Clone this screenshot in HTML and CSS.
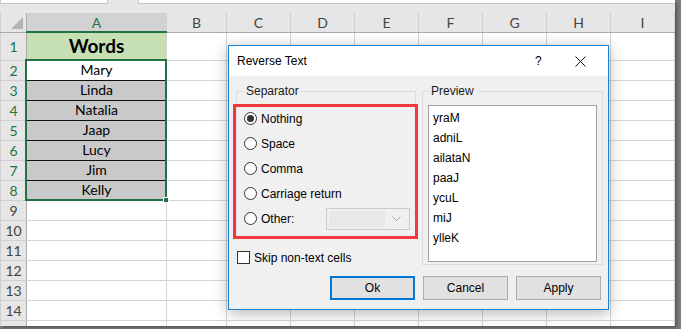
FILE: index.html
```html
<!DOCTYPE html>
<html lang="en">

<head>
    <meta charset="UTF-8">
    <title>Reverse Text</title>
    <link rel="stylesheet" href="styles.css">
</head>

<body>
    <div class="screen">
        <div class="formula-strip">
            <div class="name-box"></div>
            <div class="formula-box"></div>
        </div>

        <table class="sheet">
            <colgroup>
                <col class="c-hdr">
                <col class="c-a">
                <col class="c-b">
                <col class="c-std" span="7">
            </colgroup>
            <tr class="hdr-row">
                <th class="corner"><svg width="12" height="12" viewBox="0 0 12 12"><polygon points="12,0 12,12 0,12" fill="#b4b4b4"/></svg></th>
                <th class="col-sel">A</th><th>B</th><th>C</th><th>D</th><th>E</th><th>F</th><th>G</th><th>H</th><th>I</th>
            </tr>
            <tr class="row-1">
                <th class="row-sel">1</th><td class="words">Words</td><td></td><td></td><td></td><td></td><td></td><td></td><td></td><td></td>
            </tr>
            <tr>
                <th class="row-sel">2</th><td class="name">Mary</td><td></td><td></td><td></td><td></td><td></td><td></td><td></td><td></td>
            </tr>
            <tr>
                <th class="row-sel">3</th><td class="name grey">Linda</td><td></td><td></td><td></td><td></td><td></td><td></td><td></td><td></td>
            </tr>
            <tr>
                <th class="row-sel">4</th><td class="name grey">Natalia</td><td></td><td></td><td></td><td></td><td></td><td></td><td></td><td></td>
            </tr>
            <tr>
                <th class="row-sel">5</th><td class="name grey">Jaap</td><td></td><td></td><td></td><td></td><td></td><td></td><td></td><td></td>
            </tr>
            <tr>
                <th class="row-sel">6</th><td class="name grey">Lucy</td><td></td><td></td><td></td><td></td><td></td><td></td><td></td><td></td>
            </tr>
            <tr>
                <th class="row-sel">7</th><td class="name grey">Jim</td><td></td><td></td><td></td><td></td><td></td><td></td><td></td><td></td>
            </tr>
            <tr>
                <th class="row-sel">8</th><td class="name grey last">Kelly</td><td></td><td></td><td></td><td></td><td></td><td></td><td></td><td></td>
            </tr>
            <tr>
                <th>9</th><td></td><td></td><td></td><td></td><td></td><td></td><td></td><td></td><td></td>
            </tr>
            <tr>
                <th>10</th><td></td><td></td><td></td><td></td><td></td><td></td><td></td><td></td><td></td>
            </tr>
            <tr>
                <th>11</th><td></td><td></td><td></td><td></td><td></td><td></td><td></td><td></td><td></td>
            </tr>
            <tr>
                <th>12</th><td></td><td></td><td></td><td></td><td></td><td></td><td></td><td></td><td></td>
            </tr>
            <tr>
                <th>13</th><td></td><td></td><td></td><td></td><td></td><td></td><td></td><td></td><td></td>
            </tr>
            <tr>
                <th>14</th><td></td><td></td><td></td><td></td><td></td><td></td><td></td><td></td><td></td>
            </tr>
            <tr>
                <th></th><td></td><td></td><td></td><td></td><td></td><td></td><td></td><td></td><td></td>
            </tr>
        </table>

        <!-- selection A2:A8 -->
        <div class="selection"><span class="fill-handle"></span></div>

        <div class="dialog">
            <div class="dlg-title">
                <span class="dlg-name">Reverse Text</span>
                <span class="dlg-help">?</span>
                <span class="dlg-close">
                    <svg width="11" height="11" viewBox="0 0 11 11"><path d="M0.5 0.5 L10.5 10.5 M10.5 0.5 L0.5 10.5" stroke="#111" stroke-width="1" fill="none"/></svg>
                </span>
            </div>

            <div class="dlg-body">
                <div class="dlg-cols">
                    <div class="dlg-left">
                        <fieldset class="group group-sep">
                            <legend>Separator</legend>
                            <label class="opt"><span class="radio checked"></span>Nothing</label>
                            <label class="opt"><span class="radio"></span>Space</label>
                            <label class="opt"><span class="radio"></span>Comma</label>
                            <label class="opt"><span class="radio"></span>Carriage return</label>
                            <label class="opt"><span class="radio"></span>Other:
                                <span class="combo">
                                    <span class="combo-field"></span>
                                    <svg width="9" height="6" viewBox="0 0 9 6"><path d="M0.5 0.5 L4.5 4.5 L8.5 0.5" stroke="#a8a8a8" fill="none"/></svg>
                                </span>
                            </label>
                        </fieldset>
                        <label class="check"><span class="box"></span>Skip non-text cells</label>
                    </div>

                    <fieldset class="group group-preview">
                        <legend>Preview</legend>
                        <ul class="preview-list">
                            <li>yraM</li>
                            <li>adniL</li>
                            <li>ailataN</li>
                            <li>paaJ</li>
                            <li>ycuL</li>
                            <li>miJ</li>
                            <li>ylleK</li>
                        </ul>
                    </fieldset>
                </div>

                <div class="dlg-buttons">
                    <button class="btn btn-default">Ok</button>
                    <button class="btn">Cancel</button>
                    <button class="btn">Apply</button>
                </div>
            </div>

            <!-- red callout round the separator options -->
            <div class="highlight"></div>
        </div>
    </div>
</body>

</html>
```

FILE: styles.css
```css
* {
    box-sizing: border-box;
}

body {
    margin: 0;
    width: 681px;
    height: 329px;
    overflow: hidden;
    background: #7f7f7f;
}

.screen {
    position: relative;
    width: 675px;
    height: 326px;
    overflow: hidden;
    background: #fff;
    box-shadow: 2px 2px 4px rgba(0, 0, 0, 0.35);
}

/* formula bar remains */

.formula-strip {
    display: flex;
    height: 13px;
    background: #e6e6e6;
}

.name-box {
    width: 108px;
    height: 4px;
    background: #fff;
    border: 1px solid #c6c6c6;
    border-top: 0;
    margin-right: 30px;
}

.formula-box {
    flex: 1;
    height: 4px;
    background: #fff;
    border: 1px solid #c6c6c6;
    border-top: 0;
    border-right: 0;
}

/* worksheet */

.sheet {
    table-layout: fixed;
    border-collapse: collapse;
    width: 674px;
    font-family: Lato, "Liberation Sans", sans-serif;
    font-size: 14px;
    color: #000;
}

.c-hdr {
    width: 26px;
}

.c-a {
    width: 140px;
}

.c-b {
    width: 60px;
}

.c-std {
    width: 64px;
}

.sheet tr {
    height: 20px;
}

.sheet .hdr-row {
    height: 19px;
}

.sheet .row-1 {
    height: 28px;
}

.sheet td {
    border: 1px solid #d4d4d4;
    padding: 0;
    text-align: center;
    line-height: 18px;
}

.sheet th {
    background: #e6e6e6;
    border: 1px solid #cfcfcf;
    border-right-color: #ababab;
    padding: 0;
    font-weight: normal;
    font-size: 14px;
    color: #444;
    text-align: center;
}

.hdr-row th {
    border-top: 0;
    border-right-color: #cfcfcf;
    border-bottom: 1px solid #ababab;
    line-height: 17px;
}

.hdr-row .corner {
    border-right-color: #ababab;
    text-align: right;
    vertical-align: bottom;
    padding: 0 3px 3px 0;
    line-height: 0;
}

.hdr-row .col-sel {
    background: #d2d2d2;
    color: #217346;
    border-bottom: 2px solid #217346;
}

.sheet th.row-sel {
    color: #217346;
}

.words {
    background: #c6e0b4;
    font-weight: bold;
    font-size: 19px;
    border-right-color: #3b6b4d;
}

.sheet td.grey {
    background: #c9c9c9;
}

.sheet td.name {
    border-bottom: 1px solid #111;
    border-right-color: #217346;
}

.sheet td.last {
    border-bottom-color: #217346;
}

/* green selection frame */

.selection {
    position: absolute;
    left: 25px;
    top: 59px;
    width: 142px;
    height: 142px;
    border: 2px solid #217346;
}

.fill-handle {
    position: absolute;
    right: -4px;
    bottom: -4px;
    width: 6px;
    height: 6px;
    background: #217346;
    border: 1px solid #fff;
}

/* dialog */

.dialog {
    position: absolute;
    left: 228px;
    top: 45px;
    width: 381px;
    height: 265px;
    background: #f0f0f0;
    border: 1px solid #1883d7;
    box-shadow: 0 3px 14px rgba(0, 0, 0, 0.3);
    font-family: "Liberation Sans", Arial, sans-serif;
    font-size: 12px;
    color: #000;
}

.dlg-title {
    display: flex;
    align-items: center;
    height: 30px;
    background: #fff;
    padding-left: 8px;
}

.dlg-name {
    flex: 1;
}

.dlg-help {
    width: 40px;
}

.dlg-close {
    width: 33px;
    line-height: 0;
}

.dlg-body {
    padding: 8px 5px 0 7px;
}

.dlg-cols {
    display: flex;
    gap: 6px;
    align-items: flex-start;
}

.group {
    margin: 0;
    border: 1px solid #dcdcdc;
    min-width: 0;
}

.group legend {
    padding: 0 2px;
    line-height: 14px;
    color: #1a1a1a;
}

.group-sep {
    width: 180px;
    padding: 8px 5px 7px 7px;
}

.group-preview {
    width: 181px;
    padding: 7px 5px 2px 5px;
}

.group-preview legend {
    margin-left: 1px;
}

.opt {
    display: flex;
    align-items: center;
    height: 25px;
}

.radio {
    position: relative;
    width: 13px;
    height: 13px;
    margin-right: 4px;
    border: 1px solid #333;
    border-radius: 50%;
    background: #fff;
}

.radio.checked::after {
    content: "";
    position: absolute;
    left: 2px;
    top: 2px;
    width: 7px;
    height: 7px;
    border-radius: 50%;
    background: #333;
}

.combo {
    display: flex;
    align-items: center;
    margin-left: auto;
    width: 84px;
    height: 22px;
    padding: 2px 8px 2px 2px;
    border: 1px solid #cccccc;
    background: #f0f0f0;
}

.combo-field {
    flex: 1;
    height: 100%;
    margin-right: 7px;
    background: #e8e8e8;
}

.check {
    display: flex;
    align-items: center;
    margin: 12px 0 0 1px;
    height: 13px;
}

.box {
    width: 13px;
    height: 13px;
    margin-right: 4px;
    border: 1px solid #333;
    background: #fff;
}

.preview-list {
    list-style: none;
    margin: 0;
    padding: 2px 4px;
    height: 157px;
    background: #fff;
    border: 1px solid #a0a0a0;
}

.preview-list li {
    line-height: 20px;
}

.dlg-buttons {
    display: flex;
    justify-content: flex-end;
    gap: 8px;
    margin: 11px 2px 0 0;
}

.btn {
    width: 85px;
    height: 24px;
    padding: 0;
    background: #e1e1e1;
    border: 1px solid #adadad;
    font: inherit;
    color: #000;
}

.btn-default {
    border: 2px solid #0078d7;
}

.highlight {
    position: absolute;
    left: 4px;
    top: 58px;
    width: 185px;
    height: 135px;
    border: 3px solid #ee3a3c;
}
```
